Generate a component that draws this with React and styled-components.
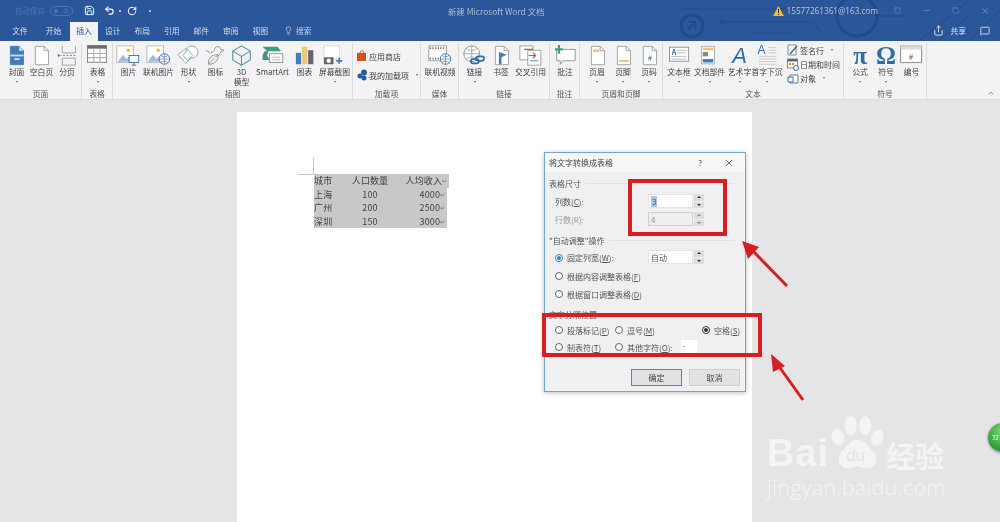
import styled, { createGlobalStyle } from 'styled-components';
import { Save, Undo2, RotateCw, Lightbulb, MessageSquare, Share, Minus, Square, X, ChevronUp } from 'lucide-react';

const GlobalStyle = createGlobalStyle`
  html, body { margin: 0; padding: 0; height: 100%; overflow: hidden; }
  body { font-family: "Noto Sans CJK SC", "Noto Sans", sans-serif; color: #444; }
`;

const Page = ({ fill = '#fff', stroke = '#9a9a9a', children }) => (
  <svg width="24" height="24" viewBox="0 0 24 24">
    <path d="M5 1.5h10l5 5v16H5z" fill={fill} stroke={stroke} />
    <path d="M15 1.5v5h5" fill="none" stroke={stroke} />
    {children}
  </svg>
);

const Photo = ({ children }) => (
  <svg width="28" height="24" viewBox="0 0 28 24">
    <rect x="1" y="1" width="19" height="19" fill="#fff" stroke="#b5b5b5" />
    <circle cx="14" cy="6" r="2" fill="#eeb94a" />
    <path d="M2 19l6-8 4 5 3-3 4 6z" fill="#9dbddd" />
    {children}
  </svg>
);

const icons = {
  cover: <Page fill="#3f7dbd" stroke="#3f7dbd"><path d="M15 1.5v5h5z" fill="#cfe0f0" /><path d="M5 11h15v2H5z" fill="#cfe0f0" /><path d="M9 15h7l-1 2h-5z" fill="#cfe0f0" /></Page>,
  blank: <Page />,
  pagebreak: (
    <svg width="24" height="24" viewBox="0 0 24 24">
      <path d="M6 9V1M21 9V1M6 9h15M6 15h15M6 15v8M21 15v8M6 23h15" fill="none" stroke="#9a9a9a" />
      <path d="M1 10l3 2-3 2z" fill="#3f7dbd" />
      <path d="M4 12h1M7 12h2M11 12h2M15 12h2M19 12h2" stroke="#3f7dbd" />
    </svg>
  ),
  table: (
    <svg width="20" height="20" viewBox="0 0 20 20">
      <rect x=".5" y=".5" width="18" height="16" fill="#fff" stroke="#8a8a8a" />
      <rect x=".5" y=".5" width="18" height="3" fill="#6a6a6a" />
      <path d="M1 8h18M1 12h18M6.5 4v13M12.5 4v13" stroke="#b0b0b0" />
    </svg>
  ),
  picture: <Photo><rect x="15" y="12" width="11" height="8" fill="#fff" stroke="#2f6ea5" /><path d="M18 23h5M20.5 20v3" stroke="#2f6ea5" /></Photo>,
  online: <Photo><circle cx="21" cy="16" r="6" fill="#fff" stroke="#2f6ea5" /><path d="M15 16h12M21 10v12M17 12c3 2 5 2 8 0M17 20c3-2 5-2 8 0" fill="none" stroke="#2f6ea5" strokeWidth=".7" /></Photo>,
  shapes: (
    <svg width="26" height="24" viewBox="0 0 26 24">
      <path d="M1 11L10 4l8 9-8 8z" fill="#fff" stroke="#7f9fbd" />
      <circle cx="17" cy="8" r="7" fill="#fff" stroke="#7f9fbd" />
      <path d="M12 5l6 7-6 6-5-6z" fill="#fff" stroke="#7f9fbd" />
    </svg>
  ),
  glyphs: (
    <svg width="26" height="24" viewBox="0 0 26 24" fill="none" stroke="#8a8a8a">
      <path d="M8 9c2-1 4-2 4-4s3-4 5-3 2 3 2 3l4 1-4 2c0 3-3 5-6 5" />
      <path d="M5 22c0-7 3-11 11-11 1 6-3 11-11 11zM5 22l7-7" />
      <path d="M2 6l5 3" />
    </svg>
  ),
  cube: (
    <svg width="24" height="24" viewBox="0 0 24 24" fill="none" stroke="#4f8fae" strokeWidth="1.2">
      <path d="M12 1l10 6v10l-10 6-10-6V7zM2 7l10 6 10-6M12 13v10" />
    </svg>
  ),
  smartart: (
    <svg width="28" height="24" viewBox="0 0 28 24">
      <path d="M3 2h17l4 5H8z" fill="#3d9c86" />
      <path d="M3 17h8l-3-5 2-5H5l-2 5z" fill="#4c8f7c" />
      <rect x="11" y="10" width="15" height="10" fill="#fff" stroke="#8a8a8a" />
      <path d="M14 14h9M14 17h9" stroke="#aaa" />
    </svg>
  ),
  chart: (
    <svg width="22" height="24" viewBox="0 0 22 24">
      <rect x="1" y="9" width="6" height="13" fill="#3f7dbd" />
      <rect x="8" y="2" width="6" height="20" fill="#eec77a" />
      <rect x="15" y="6" width="6" height="16" fill="#666" />
    </svg>
  ),
  screenshot: (
    <svg width="26" height="24" viewBox="0 0 26 24">
      <rect x="1" y="1" width="18" height="15" fill="#fff" stroke="#c8c8c8" strokeDasharray="2 1" />
      <rect x="1" y="14" width="11" height="8" rx="1" fill="#666" />
      <circle cx="6.5" cy="18" r="2.5" fill="#fff" />
      <path d="M15 18h7M18.5 14.5v7" stroke="#3f7dbd" strokeWidth="2" />
    </svg>
  ),
  video: (
    <svg width="28" height="24" viewBox="0 0 28 24">
      <rect x="1" y="1" width="20" height="17" fill="#fff" stroke="#999" />
      <path d="M2 3.5h18M2 15.5h18" stroke="#777" strokeDasharray="1.5 1.5" strokeWidth="2" />
      <circle cx="20" cy="16" r="6" fill="#fff" stroke="#2f6ea5" />
      <path d="M14 16h12M20 10v12M16 12c3 2 5 2 8 0M16 20c3-2 5-2 8 0" fill="none" stroke="#2f6ea5" strokeWidth=".7" />
    </svg>
  ),
  link: (
    <svg width="26" height="24" viewBox="0 0 26 24">
      <circle cx="10" cy="10" r="9" fill="#fff" stroke="#8a8a8a" />
      <path d="M1 10h18M10 1v18M4 4c4 3 8 3 12 0M4 16c4-3 8-3 12 0" fill="none" stroke="#8a8a8a" strokeWidth=".8" />
      <rect x="9" y="16" width="9" height="5" rx="2.5" fill="none" stroke="#2f6ea5" strokeWidth="2" />
      <rect x="15" y="13" width="9" height="5" rx="2.5" fill="none" stroke="#2f6ea5" strokeWidth="2" />
    </svg>
  ),
  bookmark: <Page><path d="M9 8v14h3v-8l6-3z" fill="#3f7dbd" /></Page>,
  crossref: (
    <svg width="26" height="24" viewBox="0 0 26 24">
      <path d="M1 1h15v16H1z" fill="#fff" stroke="#999" />
      <path d="M10 6h15v17H10z" fill="#fff" stroke="#999" />
      <path d="M6 5h10M19 12h-8M19 12l-3-3M19 12l-3 3" fill="none" stroke="#cf4b3a" strokeWidth="1.3" />
      <path d="M13 18h9" stroke="#3f7dbd" />
    </svg>
  ),
  comment: (
    <svg width="24" height="24" viewBox="0 0 24 24">
      <path d="M2 5h21v13H9l-3 4v-4H2z" fill="#fff" stroke="#8a8a8a" />
      <path d="M0 5h9M4.5 0v10" stroke="#46a07f" strokeWidth="2.5" />
    </svg>
  ),
  header: <Page><path d="M7 5h7v3H7z" fill="#eec77a" /></Page>,
  footer: <Page><path d="M7 17h11v2.5H7z" fill="#eec77a" /></Page>,
  pagenum: <Page><text x="12.5" y="18" fontSize="9" fill="#2f6ea5" textAnchor="middle">#</text></Page>,
  textbox: (
    <svg width="24" height="24" viewBox="0 0 24 24">
      <rect x=".5" y="2.5" width="22" height="16" fill="#fff" stroke="#8a8a8a" />
      <text x="3" y="11" fontSize="8" fontWeight="700" fill="#2f6ea5">A</text>
      <path d="M9 6h11M9 9h11M3 13h17M3 16h17" stroke="#b5b5b5" />
    </svg>
  ),
  parts: (
    <svg width="20" height="24" viewBox="0 0 20 24">
      <rect x=".5" y="1.5" width="15" height="20" fill="#fff" stroke="#aaa" />
      <rect x="2" y="3" width="12" height="3" fill="#eec77a" />
      <rect x="2" y="8" width="6" height="5" fill="#888" />
      <rect x="2" y="16" width="12" height="4" fill="#3f7dbd" />
    </svg>
  ),
  sign: (
    <svg width="12" height="12" viewBox="0 0 12 12">
      <path d="M1 1h8v10H1z" fill="#fff" stroke="#888" />
      <path d="M3 10l7-8" stroke="#2f6ea5" strokeWidth="1.5" />
    </svg>
  ),
  date: (
    <svg width="12" height="13" viewBox="0 0 12 13">
      <rect x=".5" y="1" width="10" height="9" fill="#fff" stroke="#888" />
      <rect x=".5" y="1" width="10" height="2.5" fill="#666" />
      <path d="M2 5h2v2H2zM5 5h2v2H5z" fill="#d5863a" />
      <circle cx="9" cy="10" r="2.5" fill="#fff" stroke="#2f6ea5" />
    </svg>
  ),
  object: (
    <svg width="12" height="12" viewBox="0 0 12 12" fill="#fff" stroke="#777">
      <path d="M3 3h8v8H3z" />
      <path d="M1 5h5v5H1z" stroke="#2f6ea5" />
    </svg>
  ),
  store: (
    <svg width="11" height="12" viewBox="0 0 11 12">
      <path d="M0 3h9v8H0z" fill="#d94f1e" />
      <path d="M3 3c0-3 4-3 4 0" fill="none" stroke="#d94f1e" />
    </svg>
  ),
  addin: (
    <svg width="11" height="12" viewBox="0 0 11 12" fill="#1f5fa5">
      <circle cx="7" cy="3.5" r="3" />
      <circle cx="3" cy="7" r="2.5" />
      <circle cx="7" cy="9" r="2.5" />
    </svg>
  ),
  number: (
    <svg width="20" height="18" viewBox="0 0 20 18">
      <rect x=".5" y="1" width="18" height="14" fill="#fff" stroke="#999" />
      <rect x=".5" y="1" width="18" height="3" fill="#ddd" />
      <text x="9.5" y="12.5" fontSize="7" fill="#2f6ea5" textAnchor="middle">#</text>
    </svg>
  ),
};

const ribbon = [
  { name: '页面', w: 82, pad: 4, items: [
    { icon: 'cover', label: '封面', w: 25, caret: true },
    { icon: 'blank', label: '空白页', w: 25 },
    { icon: 'pagebreak', label: '分页', w: 26 },
  ] },
  { name: '表格', w: 31, pad: 1, items: [{ icon: 'table', label: '表格', w: 29, caret: true }] },
  { name: '插图', w: 240, pad: 2, items: [
    { icon: 'picture', label: '图片', w: 27 },
    { icon: 'online', label: '联机图片', w: 33 },
    { icon: 'shapes', label: '形状', w: 27, caret: true },
    { icon: 'glyphs', label: '图标', w: 27 },
    { icon: 'cube', label: ['3D', '模型'], w: 25 },
    { icon: 'smartart', label: 'SmartArt', w: 37 },
    { icon: 'chart', label: '图表', w: 27 },
    { icon: 'screenshot', label: '屏幕截图', w: 33, caret: true },
  ] },
  { name: '加载项', w: 68, listPad: 4, listTop: 7, listGap: 7, list: [
    { icon: 'store', label: '应用商店' },
    { icon: 'addin', label: '我的加载项', caret: true },
  ] },
  { name: '媒体', w: 38, pad: 2, items: [{ icon: 'video', label: '联机视频', w: 34 }] },
  { name: '链接', w: 91, pad: 1, items: [
    { icon: 'link', label: '链接', w: 29, caret: true },
    { icon: 'bookmark', label: '书签', w: 24 },
    { icon: 'crossref', label: '交叉引用', w: 35 },
  ] },
  { name: '批注', w: 30, pad: 1, items: [{ icon: 'comment', label: '批注', w: 28 }] },
  { name: '页眉和页脚', w: 83, pad: 4, items: [
    { icon: 'header', label: '页眉', w: 26, caret: true },
    { icon: 'footer', label: '页脚', w: 26, caret: true },
    { icon: 'pagenum', label: '页码', w: 26, caret: true },
  ] },
  { name: '文本', w: 181, pad: 2, listPad: 6, listTop: 1, listGap: 2, items: [
    { icon: 'textbox', label: '文本框', w: 28, caret: true },
    { icon: 'parts', label: '文档部件', w: 33, caret: true },
    { glyph: 'wordart', label: '艺术字', w: 27, caret: true },
    { glyph: 'dropcap', label: '首字下沉', w: 28, caret: true },
  ], list: [
    { icon: 'sign', label: '签名行', caret: true },
    { icon: 'date', label: '日期和时间' },
    { icon: 'object', label: '对象', caret: true },
  ] },
  { name: '符号', w: 83, pad: 3, items: [
    { glyph: 'pi', label: '公式', w: 26, caret: true },
    { glyph: 'omega', label: '符号', w: 26, caret: true },
    { icon: 'number', label: '编号', w: 25 },
  ] },
];

const tabs = [
  { name: '文件', w: 34 },
  { name: '开始', w: 33 },
  { name: '插入', w: 28, active: true },
  { name: '设计', w: 29.5 },
  { name: '布局', w: 29.5 },
  { name: '引用', w: 29.5 },
  { name: '邮件', w: 29.5 },
  { name: '审阅', w: 29.5 },
  { name: '视图', w: 29.5 },
];

const rows = [
  ['城市', '人口数量', '人均收入'],
  ['上海', '100', '4000'],
  ['广州', '200', '2500'],
  ['深圳', '150', '3000'],
];

function Glyph({ name }) {
  if (name === 'pi') return <BigSymbol>π</BigSymbol>;
  if (name === 'omega') return <BigSymbol>Ω</BigSymbol>;
  if (name === 'wordart') return <WordArt>A</WordArt>;
  return (
    <DropCap>
      <span>A</span>
      <svg width="24" height="24" viewBox="0 0 24 24">
        <path d="M13 3h9M13 6h9M13 9h9M2 13h20M2 16h20M2 19h20M2 22h20" stroke="#c4c4c4" />
      </svg>
    </DropCap>
  );
}

function RibbonButton({ item }) {
  const label = Array.isArray(item.label) ? item.label : [item.label];
  return (
    <BigButton $w={item.w}>
      <IconSlot>{item.glyph ? <Glyph name={item.glyph} /> : icons[item.icon]}</IconSlot>
      {label.map(l => <ButtonLabel key={l}>{l}</ButtonLabel>)}
      {item.caret && <Caret />}
    </BigButton>
  );
}

function Spinner({ $disabled }) {
  return (
    <SpinBox $disabled={$disabled}>
      <SpinUp $disabled={$disabled} />
      <SpinDown $disabled={$disabled} />
    </SpinBox>
  );
}

function Radio({ checked, tone, children }) {
  return (
    <RadioLabel>
      <RadioDot $checked={checked} $tone={tone} />
      <span>{children}</span>
    </RadioLabel>
  );
}

function Watermark() {
  return (
    <WatermarkBox>
      <LogoRow>
        <BaiText>Bai</BaiText>
        <Paw>
          <svg width="53" height="57" viewBox="0 0 62 60" preserveAspectRatio="none" fill="rgba(255,255,255,.6)">
            <ellipse cx="8" cy="22" rx="7" ry="9" transform="rotate(-25 8 22)" />
            <ellipse cx="23" cy="10" rx="7" ry="10" />
            <ellipse cx="40" cy="10" rx="7" ry="10" />
            <ellipse cx="54" cy="23" rx="7" ry="9" transform="rotate(25 54 23)" />
            <path d="M31 25c9 0 12 7 18 12 8 7 3 19-8 18-4 0-7-2-10-2s-6 2-10 2c-11 1-16-11-8-18 6-5 9-12 18-12z" />
          </svg>
          <DuText>du</DuText>
        </Paw>
        <JingYan>经验</JingYan>
      </LogoRow>
      <Domain>jingyan.baidu.com</Domain>
    </WatermarkBox>
  );
}

export default function App() {
  return (
    <>
      <GlobalStyle />
      <Screen>
        <Chrome>
          <Circuit width="330" height="41" viewBox="0 0 330 41" fill="none" stroke="#1f4580" strokeOpacity=".7">
            <circle cx="22" cy="26" r="11" strokeWidth="3" />
            <path d="M18 30l7-8M18 22h7v7" strokeWidth="2" />
            <path d="M8 9h120M52 22h90l10 11M80 33h40" />
            <circle cx="52" cy="22" r="2" />
            <circle cx="187" cy="16" r="20" strokeWidth="3" />
            <path d="M207 16h30M250 40l50-40M300 40l30-30M270 40l30-25" />
          </Circuit>
          <TitleBar>
            <QuickAccess>
              <AutoSave>自动保存</AutoSave>
              <AutoToggle><i />关</AutoToggle>
              <Save size={11} strokeWidth={2} />
              <UndoGroup>
                <Undo2 size={11} strokeWidth={2.4} />
                <TinyCaret />
              </UndoGroup>
              <RotateCw size={10} strokeWidth={2.4} />
              <TinyCaret $far />
            </QuickAccess>
            <DocTitle>新建 Microsoft Word 文档</DocTitle>
            <WindowArea>
              <svg width="11" height="10" viewBox="0 0 11 10">
                <path d="M5.5 0L11 10H0z" fill="#f0b93a" />
                <path d="M5.5 3v4M5.5 8v1" stroke="#333" />
              </svg>
              <Account>15577261361@163.com</Account>
              <WindowButtons>
                <Square size={7} />
                <Minus size={9} />
                <Square size={7} />
                <X size={10} />
              </WindowButtons>
            </WindowArea>
          </TitleBar>
          <TabBar>
            {tabs.map(t => <Tab key={t.name} $w={t.w} $active={t.active}>{t.name}</Tab>)}
            <SearchTab>
              <Lightbulb size={9} />
              搜索
            </SearchTab>
            <TabActions>
              <Share size={11} />
              <span>共享</span>
              <MessageSquare size={10} />
            </TabActions>
          </TabBar>
        </Chrome>

        <Ribbon>
          {ribbon.map(group => (
            <Group key={group.name} $w={group.w}>
              <GroupBody $pad={group.pad}>
                {group.items && group.items.map(item => <RibbonButton key={item.label} item={item} />)}
                {group.list && (
                  <SmallList $pad={group.listPad} $top={group.listTop} $gap={group.listGap}>
                    {group.list.map(row => (
                      <SmallRow key={row.label}>
                        {icons[row.icon]}
                        {row.label}
                        {row.caret && <InlineCaret />}
                      </SmallRow>
                    ))}
                  </SmallList>
                )}
              </GroupBody>
              <GroupName>{group.name}</GroupName>
            </Group>
          ))}
          <Collapse><ChevronUp size={8} /></Collapse>
        </Ribbon>

        <Workspace>
          <Sheet>
            <CropMark />
            <WordTable>
              {rows.map((row, i) => (
                <TableRow key={row[0]} $head={i === 0}>
                  <CityCell>{row[0]}</CityCell>
                  <MiddleCell>{row[1]}</MiddleCell>
                  <LastCell>{row[2]}<Mark>↵</Mark></LastCell>
                </TableRow>
              ))}
            </WordTable>
          </Sheet>
        </Workspace>

        <Dialog>
          <DialogTitle>
            <span>将文字转换成表格</span>
            <DialogControls>
              <span>?</span>
              <X size={10} />
            </DialogControls>
          </DialogTitle>
          <DialogBody>
            <Legend>表格尺寸</Legend>
            <FieldRow $gap={4}>
              <FieldLabel>列数(<u>C</u>):</FieldLabel>
              <Input><SelectedText>3</SelectedText></Input>
              <Spinner />
            </FieldRow>
            <FieldRow $gap={4}>
              <FieldLabel $disabled>行数(R):</FieldLabel>
              <Input $disabled>4</Input>
              <Spinner $disabled />
            </FieldRow>
            <Legend $gap={7}>"自动调整"操作</Legend>
            <FieldRow $gap={3}>
              <FieldLabel><Radio checked tone="#2f7fc4">固定列宽(<u>W</u>):</Radio></FieldLabel>
              <Input>自动</Input>
              <Spinner />
            </FieldRow>
            <FieldRow $gap={5}><Radio>根据内容调整表格(<u>F</u>)</Radio></FieldRow>
            <FieldRow $gap={4}><Radio>根据窗口调整表格(<u>D</u>)</Radio></FieldRow>
            <Legend $gap={6}>文字分隔位置</Legend>
            <SeparatorRow $gap={2}>
              <Radio>段落标记(<u>P</u>)</Radio>
              <Radio>逗号(<u>M</u>)</Radio>
              <Radio checked tone="#333">空格(<u>S</u>)</Radio>
            </SeparatorRow>
            <SeparatorRow $gap={3}>
              <Radio>制表符(<u>T</u>)</Radio>
              <OtherChar>
                <Radio>其他字符(<u>O</u>):</Radio>
                <CharInput>-</CharInput>
              </OtherChar>
            </SeparatorRow>
            <DialogButtons>
              <DialogButton $primary>确定</DialogButton>
              <DialogButton>取消</DialogButton>
            </DialogButtons>
          </DialogBody>
        </Dialog>

        <RedBox $x={628} $y={179} $w={99} $h={57} />
        <RedBox $x={542} $y={313} $w={220} $h={44} />
        <Arrows width="1000" height="522" viewBox="0 0 1000 522">
          <path d="M787 286L753 251" stroke="#d81e20" strokeWidth="3" />
          <path d="M742 241l17 6-11 12z" fill="#d81e20" />
          <path d="M803 400L778 365" stroke="#d81e20" strokeWidth="3" />
          <path d="M771 354l14 12-12 6z" fill="#d81e20" />
        </Arrows>

        <Watermark />
        <Badge>32</Badge>
      </Screen>
    </>
  );
}

const Screen = styled.div`
  position: relative;
  display: flex;
  flex-direction: column;
  width: 1000px;
  height: 522px;
  overflow: hidden;
  background: #e5e4e6;
  filter: blur(0.3px);
`;
const Chrome = styled.div`
  position: relative;
  height: 41px;
  flex: none;
  background: #2b579a;
  color: #fff;
`;
const Circuit = styled.svg`
  position: absolute;
  top: 0;
  right: 0;
`;
const TitleBar = styled.div`
  position: relative;
  display: flex;
  align-items: center;
  height: 21px;
`;
const QuickAccess = styled.div`
  display: flex;
  align-items: center;
  width: 448px;
  padding-left: 15px;
  box-sizing: border-box;
`;
const AutoSave = styled.span`
  font-size: 7.5px;
  color: #4a74b5;
`;
const AutoToggle = styled.span`
  display: flex;
  align-items: center;
  justify-content: space-between;
  width: 15px;
  height: 8px;
  margin: 0 11px 0 5px;
  padding: 0 3px;
  border: 1px solid #4a74b5;
  border-radius: 6px;
  font-size: 6px;
  color: #4a74b5;
  i { width: 4px; height: 4px; border-radius: 50%; background: #4a74b5; }
`;
const UndoGroup = styled.span`
  display: flex;
  align-items: center;
  margin: 0 6px 0 9px;
`;
const TinyCaret = styled.i`
  width: 2px;
  height: 2px;
  margin-left: ${p => (p.$far ? 12 : 4)}px;
  background: #aebfda;
`;
const DocTitle = styled.span`
  font-family: "Noto Sans CJK SC", "Open Sans", sans-serif;
  font-size: 8.4px;
  color: #a9bcd8;
`;
const WindowArea = styled.div`
  display: flex;
  align-items: center;
  margin-left: auto;
  color: #a9bcd8;
`;
const Account = styled.span`
  margin-left: 3px;
  font-family: "Open Sans", sans-serif;
  font-size: 8.2px;
  color: #b7c6de;
`;
const WindowButtons = styled.span`
  display: flex;
  align-items: center;
  gap: 21px;
  margin: 0 10px 0 16px;
  color: #6f8fc0;
`;
const TabBar = styled.div`
  position: relative;
  display: flex;
  align-items: flex-end;
  height: 20px;
  padding-left: 3px;
`;
const Tab = styled.div`
  display: flex;
  align-items: center;
  justify-content: center;
  width: ${p => p.$w}px;
  height: 19px;
  padding-bottom: 2px;
  box-sizing: border-box;
  font-size: 7.8px;
  color: ${p => (p.$active ? '#2b579a' : '#d5deec')};
  background: ${p => (p.$active ? '#f3f2f4' : 'transparent')};
`;
const SearchTab = styled.div`
  display: flex;
  align-items: center;
  gap: 3px;
  height: 19px;
  padding-bottom: 2px;
  box-sizing: border-box;
  margin-left: 9px;
  font-size: 7.8px;
  color: #c2cfe3;
`;
const TabActions = styled.div`
  display: flex;
  align-items: center;
  gap: 6px;
  height: 19px;
  padding: 0 10px 2px 0;
  box-sizing: border-box;
  margin-left: auto;
  font-size: 7.8px;
  color: #dfe6f1;
  svg:last-child { margin-left: 8px; }
`;
const Ribbon = styled.div`
  display: flex;
  flex: none;
  height: 59px;
  box-sizing: border-box;
  background: #f3f2f4;
  border-bottom: 1px solid #dddcde;
`;
const Group = styled.div`
  display: flex;
  flex-direction: column;
  flex: none;
  width: ${p => p.$w}px;
  height: 56px;
  box-sizing: border-box;
  margin-top: 2px;
  border-right: 1px solid #dcdbdd;
`;
const GroupBody = styled.div`
  display: flex;
  height: 45px;
  padding-left: ${p => p.$pad || 0}px;
`;
const GroupName = styled.div`
  height: 11px;
  font-size: 7.8px;
  line-height: 11px;
  text-align: center;
  color: #555;
`;
const BigButton = styled.div`
  display: flex;
  flex-direction: column;
  align-items: center;
  flex: none;
  width: ${p => p.$w}px;
`;
const IconSlot = styled.div`
  display: flex;
  align-items: flex-start;
  justify-content: center;
  height: 24px;
  padding-top: 2px;
  box-sizing: border-box;
  svg { height: 21px; width: auto; }
`;
const ButtonLabel = styled.div`
  font-size: 7.8px;
  line-height: 10px;
  white-space: nowrap;
  color: #444;
`;
const Caret = styled.i`
  width: 0;
  height: 0;
  margin-top: 4px;
  border-left: 1.5px solid transparent;
  border-right: 1.5px solid transparent;
  border-top: 2px solid #666;
`;
const InlineCaret = styled(Caret)`
  margin: 0 0 0 6px;
`;
const SmallList = styled.div`
  display: flex;
  flex-direction: column;
  gap: ${p => p.$gap}px;
  padding: ${p => p.$top}px 0 0 ${p => p.$pad}px;
`;
const SmallRow = styled.div`
  display: flex;
  align-items: center;
  gap: 1px;
  height: 12px;
  font-size: 8px;
  white-space: nowrap;
  color: #444;
`;
const BigSymbol = styled.span`
  font-family: "Liberation Serif", serif;
  font-weight: 700;
  font-size: 25px;
  line-height: 21px;
  color: #2f6ea5;
`;
const WordArt = styled.span`
  font-family: "Liberation Sans", sans-serif;
  font-style: italic;
  font-size: 22px;
  line-height: 21px;
  color: #2f6ea5;
`;
const DropCap = styled.span`
  position: relative;
  display: block;
  width: 21px;
  height: 21px;
  span {
    position: absolute;
    left: 1px;
    top: -1px;
    font-family: "Liberation Sans", sans-serif;
    font-size: 12px;
    line-height: 13px;
    color: #2f6ea5;
  }
`;
const Collapse = styled.div`
  display: flex;
  align-items: flex-end;
  margin-left: auto;
  padding: 0 5px 2px 0;
  color: #666;
`;
const Workspace = styled.div`
  display: flex;
  justify-content: flex-start;
  flex: 1;
  min-height: 0;
  padding: 12px 0 0 237px;
`;
const Sheet = styled.div`
  position: relative;
  width: 515px;
  padding: 62px 0 0 77px;
  box-sizing: border-box;
  background: #fff;
`;
const CropMark = styled.div`
  position: absolute;
  left: 61px;
  top: 46px;
  width: 15px;
  height: 16px;
  border-right: 1px solid #c4c4c4;
  border-bottom: 1px solid #c4c4c4;
`;
const WordTable = styled.div`
  display: flex;
  flex-direction: column;
  font-size: 9px;
  line-height: 13.5px;
  color: #444;
`;
const TableRow = styled.div`
  display: grid;
  grid-template-columns: 24px 64px ${p => (p.$head ? '47px' : '45px')};
  width: max-content;
  height: 13.5px;
  background: #c8c7c9;
`;
const CityCell = styled.span`
  letter-spacing: 0.2px;
  white-space: nowrap;
`;
const MiddleCell = styled.span`
  text-align: center;
  white-space: nowrap;
  letter-spacing: 0.1px;
`;
const LastCell = styled.span`
  display: flex;
  justify-content: flex-end;
  white-space: nowrap;
  letter-spacing: 0.1px;
`;
const Mark = styled.span`
  width: 7px;
  font-size: 6px;
  color: #777;
`;
const Dialog = styled.div`
  position: absolute;
  left: 544px;
  top: 152px;
  width: 202px;
  height: 240px;
  box-sizing: border-box;
  background: #f0eff1;
  border: 1px solid #6fa5cf;
  box-shadow: 0 1px 5px rgba(0, 0, 0, 0.25);
  font-size: 8px;
  color: #555;
`;
const DialogTitle = styled.div`
  display: flex;
  align-items: center;
  justify-content: space-between;
  height: 19px;
  padding: 0 11px 0 4px;
  background: #f7f7f7;
  font-size: 8px;
  color: #444;
`;
const DialogControls = styled.div`
  display: flex;
  align-items: center;
  gap: 22px;
  color: #555;
`;
const DialogBody = styled.div`
  padding: 4px 10px 0 4px;
`;
const Legend = styled.div`
  display: flex;
  align-items: center;
  gap: 4px;
  height: 14px;
  margin-top: ${p => p.$gap || 0}px;
  white-space: nowrap;
  &::after {
    content: '';
    flex: 1;
    border-top: 1px solid #e2e1e3;
  }
`;
const FieldRow = styled.div`
  display: flex;
  align-items: center;
  height: 14px;
  margin-top: ${p => p.$gap}px;
  padding-left: 6px;
`;
const FieldLabel = styled.div`
  width: 93px;
  flex: none;
  color: ${p => (p.$disabled ? '#999' : '#555')};
`;
const Input = styled.div`
  display: flex;
  align-items: center;
  width: 45px;
  height: 14px;
  padding-left: 2px;
  box-sizing: border-box;
  background: ${p => (p.$disabled ? '#eeedef' : '#fff')};
  border: 1px solid ${p => (p.$disabled ? '#d0d0d0' : '#e4e4e4')};
  color: ${p => (p.$disabled ? '#999' : '#555')};
`;
const SelectedText = styled.span`
  padding: 0 1px;
  line-height: 11px;
  background: #a9c6e4;
`;
const SpinBox = styled.div`
  display: flex;
  flex-direction: column;
  gap: 1px;
  width: 10px;
  height: 14px;
  margin-left: 1px;
`;
const SpinUp = styled.i`
  display: flex;
  align-items: center;
  justify-content: center;
  flex: 1;
  background: #dddcde;
  &::after {
    content: '';
    border-left: 2px solid transparent;
    border-right: 2px solid transparent;
    border-bottom: 2.5px solid ${p => (p.$disabled ? '#888' : '#333')};
  }
`;
const SpinDown = styled(SpinUp)`
  &::after {
    border-bottom: 0;
    border-top: 2.5px solid ${p => (p.$disabled ? '#888' : '#333')};
  }
`;
const RadioLabel = styled.span`
  display: inline-flex;
  align-items: center;
  gap: 4px;
  white-space: nowrap;
`;
const RadioDot = styled.i`
  display: flex;
  align-items: center;
  justify-content: center;
  flex: none;
  width: 8px;
  height: 8px;
  box-sizing: border-box;
  border: 1px solid ${p => p.$tone || '#666'};
  border-radius: 50%;
  background: #fff;
  &::after {
    content: '';
    display: ${p => (p.$checked ? 'block' : 'none')};
    width: 4px;
    height: 4px;
    border-radius: 50%;
    background: ${p => p.$tone || '#333'};
  }
`;
const SeparatorRow = styled.div`
  display: grid;
  grid-template-columns: 60px 87px auto;
  align-items: center;
  height: 14px;
  margin-top: ${p => p.$gap}px;
  padding-left: 6px;
`;
const OtherChar = styled.div`
  display: flex;
  align-items: center;
  grid-column: 2 / 4;
  gap: 8px;
`;
const CharInput = styled.div`
  width: 16px;
  height: 14px;
  padding-left: 2px;
  box-sizing: border-box;
  line-height: 12px;
  background: #fff;
`;
const DialogButtons = styled.div`
  display: flex;
  justify-content: flex-end;
  gap: 7px;
  margin: 15px -5px 0 0;
`;
const DialogButton = styled.div`
  display: flex;
  align-items: center;
  justify-content: center;
  width: 51px;
  height: 17px;
  box-sizing: border-box;
  background: #e2e1e3;
  border: ${p => (p.$primary ? '1.5px solid #3f8fc4' : '1px solid #d0cfd1')};
  color: #444;
`;
const RedBox = styled.div`
  position: absolute;
  left: ${p => p.$x}px;
  top: ${p => p.$y}px;
  width: ${p => p.$w}px;
  height: ${p => p.$h}px;
  box-sizing: border-box;
  border: 4px solid #d81e20;
`;
const Arrows = styled.svg`
  position: absolute;
  left: 0;
  top: 0;
  pointer-events: none;
`;
const WatermarkBox = styled.div`
  position: absolute;
  left: 767px;
  top: 416px;
  width: 190px;
  color: rgba(255, 255, 255, 0.6);
`;
const LogoRow = styled.div`
  display: flex;
  align-items: flex-end;
  height: 57px;
`;
const BaiText = styled.span`
  font-family: "Liberation Sans", sans-serif;
  font-weight: 700;
  font-size: 38px;
  line-height: 40px;
  letter-spacing: 1px;
`;
const Paw = styled.div`
  position: relative;
  width: 53px;
  height: 57px;
  margin-left: 2px;
`;
const DuText = styled.span`
  position: absolute;
  left: 15px;
  top: 30px;
  font-family: "Liberation Sans", sans-serif;
  font-size: 17px;
  line-height: 20px;
  color: #e3e2e4;
`;
const JingYan = styled.span`
  margin-left: 2px;
  font-size: 29px;
  line-height: 36px;
  font-weight: 700;
`;
const Domain = styled.div`
  margin-top: 1px;
  font-family: "Open Sans", sans-serif;
  font-weight: 300;
  font-size: 21px;
  line-height: 26px;
  letter-spacing: 0.5px;
`;
const Badge = styled.div`
  position: absolute;
  left: 988px;
  top: 423px;
  width: 29px;
  height: 29px;
  padding-left: 4px;
  box-sizing: border-box;
  border-radius: 50%;
  background: radial-gradient(circle at 50% 30%, #7fdb72, #2f9b38 70%);
  box-shadow: 0 1px 3px rgba(0, 0, 0, 0.4);
  font-size: 6px;
  line-height: 29px;
  color: #e8ffe8;
`;
